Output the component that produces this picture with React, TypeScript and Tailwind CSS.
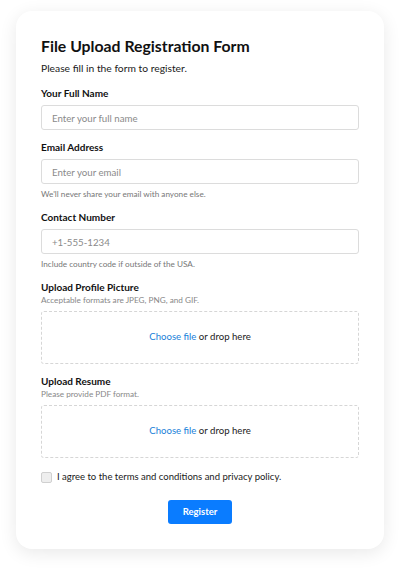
import React from 'react';

const font = { fontFamily: 'Lato, "Open Sans", sans-serif' };

function Field({ label, placeholder, help }: { label: string; placeholder: string; help?: string }) {
  return (
    <div className="flex flex-col">
      <label className="text-[10px] font-bold text-[#111] leading-[14px] mb-[5px]">{label}</label>
      <input
        placeholder={placeholder}
        className="h-[25px] w-full rounded-[3px] border border-[#dcdcdc] px-[10px] text-[9.7px] text-[#333] placeholder:text-[#8a8a8a] outline-none"
      />
      {help && <p className="text-[8.2px] text-[#777] leading-[12px] mt-[4px]">{help}</p>}
    </div>
  );
}

function Upload({ label, help }: { label: string; help: string }) {
  return (
    <div className="flex flex-col">
      <label className="text-[10px] font-bold text-[#111] leading-[14px]">{label}</label>
      <p className="text-[8.2px] text-[#888] leading-[12px] mb-[5px]">{help}</p>
      <div className="h-[53px] w-full rounded-[3px] border border-dashed border-[#d6d6d6] flex items-center justify-center text-[9.6px] text-[#222]">
        <span className="text-[#1a7fd9]">Choose file</span>
        <span>&nbsp;or drop here</span>
      </div>
    </div>
  );
}

export default function App() {
  return (
    <div className="min-h-[569px] w-[400px] bg-white pt-[11px] px-[16px]" style={font}>
      <div className="rounded-[16px] bg-white shadow-[0_4px_18px_rgba(0,0,0,0.09)] px-[25px] pt-[25px] pb-[25px]">
        <h1 className="text-[15.8px] font-bold text-[#111] leading-[20px]">File Upload Registration Form</h1>
        <p className="text-[10.3px] text-[#1a1a1a] leading-[14px] mt-[5px]">Please fill in the form to register.</p>

        <div className="flex flex-col gap-[10px] mt-[11px]">
          <Field label="Your Full Name" placeholder="Enter your full name" />
          <Field label="Email Address" placeholder="Enter your email" help="We'll never share your email with anyone else." />
          <Field label="Contact Number" placeholder="+1-555-1234" help="Include country code if outside of the USA." />
          <Upload label="Upload Profile Picture" help="Acceptable formats are JPEG, PNG, and GIF." />
          <Upload label="Upload Resume" help="Please provide PDF format." />
        </div>

        <label className="flex items-center gap-[5px] mt-[12px] h-[14px]">
          <span className="h-[11px] w-[11px] rounded-[2px] border border-[#d0d0d0] bg-[#eee]" />
          <span className="text-[9.5px] text-[#1a1a1a]">I agree to the terms and conditions and privacy policy.</span>
        </label>

        <div className="flex justify-center mt-[16px]">
          <button className="h-[24px] w-[64px] rounded-[3px] bg-[#0a7cff] text-white text-[9.5px] font-bold">Register</button>
        </div>
      </div>
    </div>
  );
}
